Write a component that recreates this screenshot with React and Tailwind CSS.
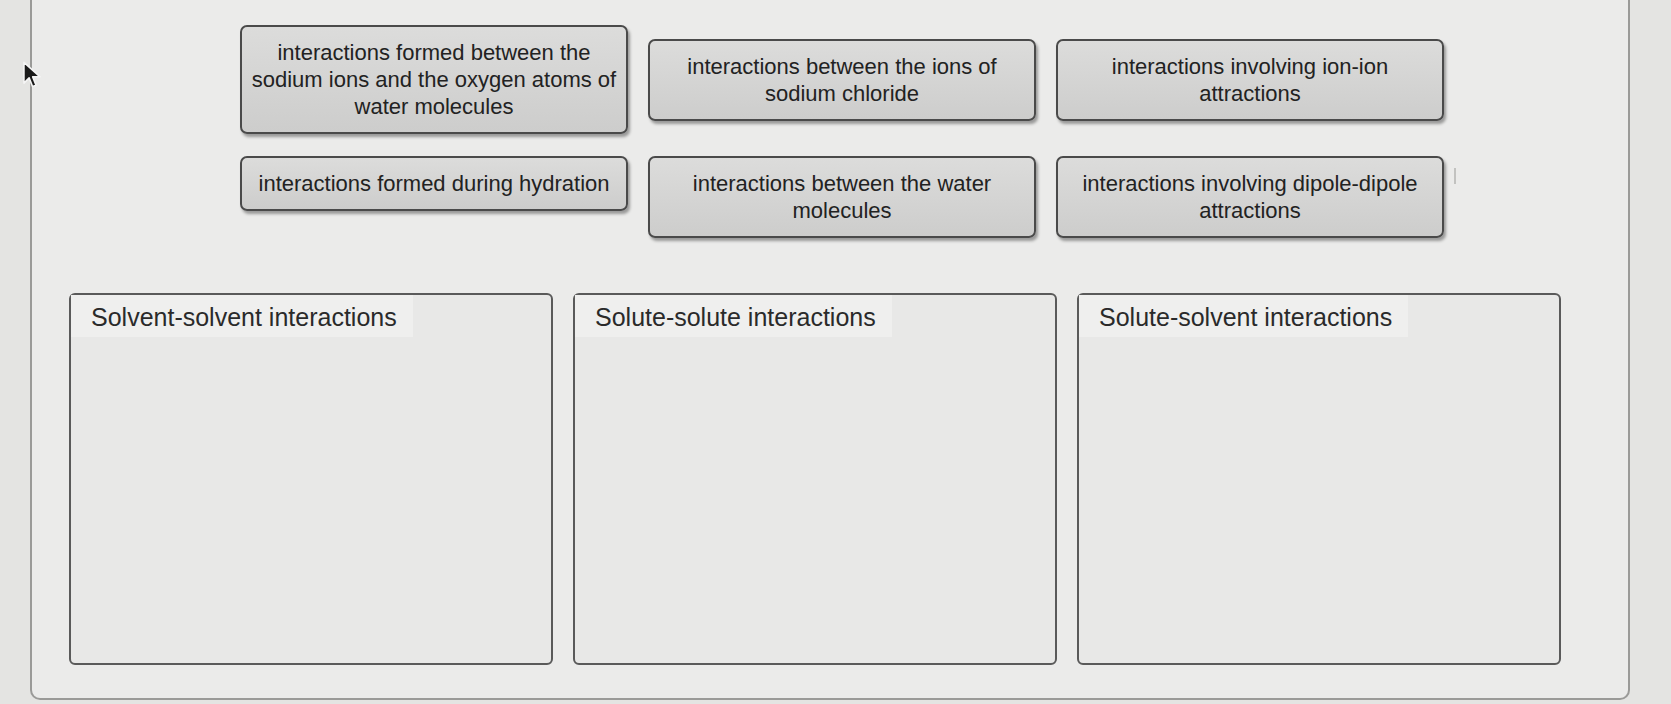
import React from "react";

const tiles = [
  [
    "interactions formed between the sodium ions and the oxygen atoms of water molecules",
    "interactions between the ions of sodium chloride",
    "interactions involving ion-ion attractions",
  ],
  [
    "interactions formed during hydration",
    "interactions between the water molecules",
    "interactions involving dipole-dipole attractions",
  ],
];

const bins = [
  "Solvent-solvent interactions",
  "Solute-solute interactions",
  "Solute-solvent interactions",
];

function Tile({ text }) {
  return (
    <div className="rounded-[7px] border-2 border-[#4a4a4a] bg-gradient-to-b from-[#dcdcdb] to-[#cdcdcc] px-2 py-[12px] text-center text-[22px] leading-[27px] text-[#222] shadow-[2px_3px_3px_rgba(0,0,0,0.35)] cursor-grab select-none">
      {text}
    </div>
  );
}

function Bin({ label }) {
  return (
    <div className="h-[372px] rounded-[6px] border-2 border-[#5a5a5a] bg-[#e8e8e7]">
      <div className="inline-block bg-[#efefee] pl-[20px] pr-[16px] pt-[6px] pb-[4px] text-[25px] leading-[32px] text-[#2a2a2a]">
        {label}
      </div>
    </div>
  );
}

function Pointer() {
  return (
    <svg width="22" height="30" viewBox="0 0 18 26" className="absolute left-[21px] top-[60px]">
      <path
        d="M2 2 L2 20 L6.5 15.5 L9.5 23 L12.5 21.8 L9.6 14.6 L16 14.6 Z"
        fill="#1a1a1a"
        stroke="#f5f5f5"
        strokeWidth="1.4"
        strokeLinejoin="round"
      />
    </svg>
  );
}

export default function App() {
  return (
    <div
      className="relative h-[704px] w-full overflow-hidden bg-[#e4e4e2]"
      style={{ fontFamily: '"Liberation Sans", Arial, sans-serif' }}
    >
      <Pointer />
      <div className="ml-[30px] h-[700px] w-[1600px] rounded-b-[10px] border-x-2 border-b-2 border-[#9a9a98] bg-[#ebebea]">
        <div className="relative pt-[25px] pl-[208px]">
          <div className="grid w-[1204px] grid-cols-3 items-center gap-x-[20px]">
            {tiles[0].map((t) => (
              <Tile key={t} text={t} />
            ))}
          </div>
          <div className="mt-[22px] grid w-[1204px] grid-cols-3 items-start gap-x-[20px]">
            {tiles[1].map((t) => (
              <Tile key={t} text={t} />
            ))}
          </div>
          {/* text caret left in the tray */}
          <span className="absolute left-[1422px] top-[168px] h-[16px] w-[2px] bg-[#c2c2c0]" />
        </div>
        <div className="mt-[55px] ml-[37px] grid w-[1492px] grid-cols-3 gap-x-[20px]">
          {bins.map((b) => (
            <Bin key={b} label={b} />
          ))}
        </div>
      </div>
    </div>
  );
}
